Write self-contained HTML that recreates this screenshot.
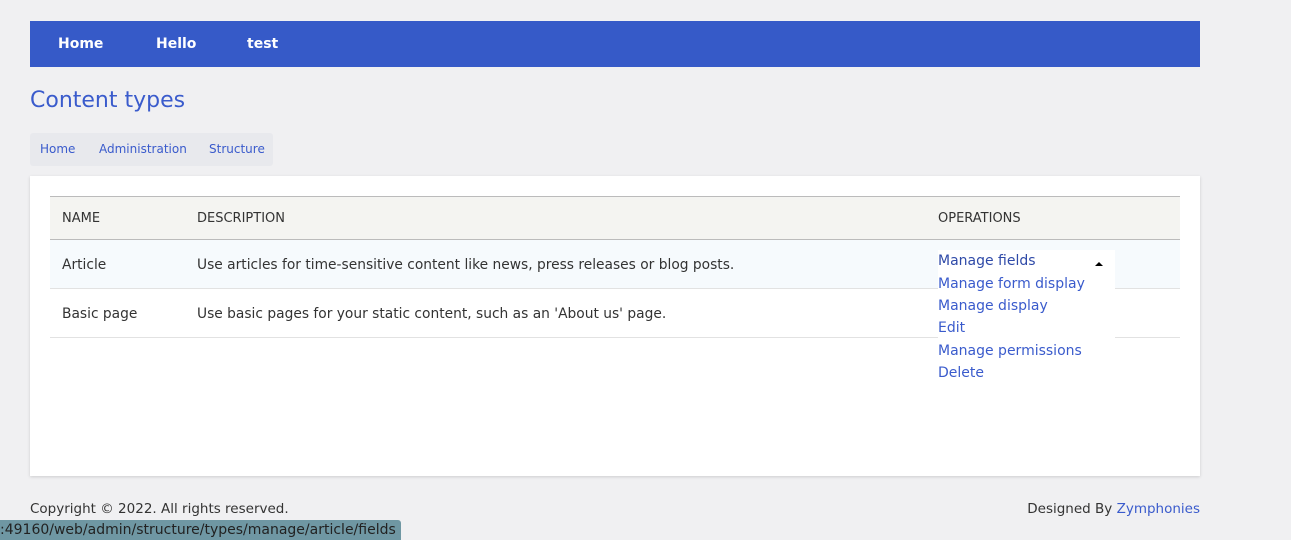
<!DOCTYPE html>
<html><head><meta charset="utf-8"><style>
*{margin:0;padding:0;box-sizing:border-box}
body{width:1291px;height:540px;overflow:hidden;background:#f0f0f2;font-family:"DejaVu Sans",sans-serif;position:relative;color:#333}
.nav{position:absolute;left:30px;top:21px;width:1170px;height:46px;background:#365ac8;}
.nav span{position:absolute;top:15px;color:#fff;font-size:14px;font-weight:bold}
h1{position:absolute;left:30px;top:88px;font-size:22px;font-weight:normal;color:#3a5bcc}
.bc{position:absolute;left:30px;top:133px;width:243px;height:33px;background:#e8e9ed;border-radius:3px}
.bc span{position:absolute;top:9px;font-size:12px;color:#3a5bcc}
.card{position:absolute;left:30px;top:176px;width:1170px;height:300px;background:#fff;box-shadow:0 1px 3px rgba(0,0,0,.15)}
.th{position:absolute;left:20px;top:20px;width:1130px;height:44px;background:#f4f4f1;border-top:1px solid #bbb;border-bottom:1px solid #bbb}
.r1{position:absolute;left:20px;top:64px;width:1130px;height:49px;background:#f6fafd;border-bottom:1px solid #e2e2e2}
.r2{position:absolute;left:20px;top:113px;width:1130px;height:49px;border-bottom:1px solid #e2e2e2}
.t{position:absolute;font-size:13.8px;color:#333;white-space:nowrap}
.dd{position:absolute;left:908px;top:74px;width:177px;height:150px;background:#fff}
.dd div{position:absolute;left:0;font-size:14px;color:#3a5bcc;white-space:nowrap}
.foot{position:absolute;top:501px;font-size:13.5px;color:#333}
.status{position:absolute;left:0;top:520px;width:401px;height:20px;background:#6f97a3;border-radius:0 3px 0 0;color:#222;font-size:14px;padding:2px 0 0 0;white-space:nowrap}
</style></head><body>
<div class="nav"><span style="left:28px">Home</span><span style="left:126px">Hello</span><span style="left:217px">test</span></div>
<h1>Content types</h1>
<div class="bc"><span style="left:10px">Home</span><span style="left:69px">Administration</span><span style="left:179px">Structure</span></div>
<div class="card">
<div class="th"></div><div class="r1"></div><div class="r2"></div>
<div class="t" style="left:32px;top:35px;font-size:13px">NAME</div>
<div class="t" style="left:167px;top:35px;font-size:13px">DESCRIPTION</div>
<div class="t" style="left:908px;top:35px;font-size:13px">OPERATIONS</div>
<div class="t" style="left:32px;top:81px">Article</div>
<div class="t" style="left:167px;top:81px">Use articles for time-sensitive content like news, press releases or blog posts.</div>
<div class="t" style="left:32px;top:130px">Basic page</div>
<div class="t" style="left:167px;top:130px">Use basic pages for your static content, such as an 'About us' page.</div>
<div class="dd">
<div style="top:3px;color:#2f4aa8">Manage fields</div>
<div style="top:26px">Manage form display</div>
<div style="top:48px">Manage display</div>
<div style="top:70px">Edit</div>
<div style="top:93px">Manage permissions</div>
<div style="top:115px">Delete</div>
<div style="left:157px;top:12px;width:0;height:0;border-left:4px solid transparent;border-right:4px solid transparent;border-bottom:4px solid #000"></div>
</div>
</div>
<div class="foot" style="left:30px">Copyright © 2022. All rights reserved.</div>
<div class="foot" style="right:91px">Designed By <span style="color:#3a5bcc">Zymphonies</span></div>
<div class="status">:49160/web/admin/structure/types/manage/article/fields</div>
</body></html>
